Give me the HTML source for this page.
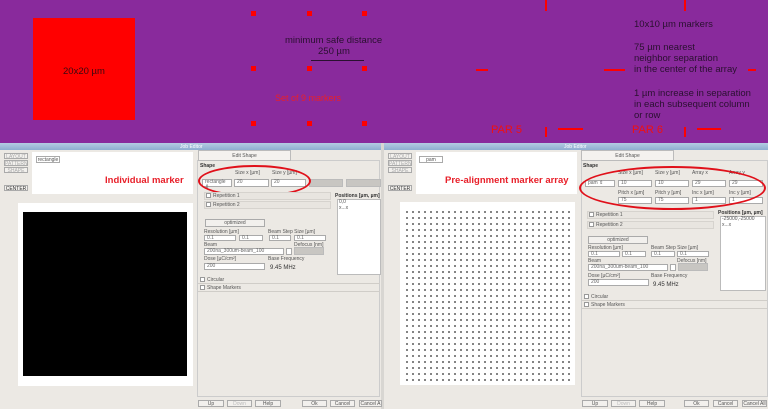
<!DOCTYPE html><html><head><meta charset="utf-8"><style>
*{margin:0;padding:0;box-sizing:border-box}
body{width:768px;height:409px;overflow:hidden;background:#ece9e4;font-family:"Liberation Sans",sans-serif;position:relative}
.a{position:absolute}
.t{position:absolute;font-size:5px;color:#555;white-space:nowrap;line-height:6px}
.in{position:absolute;background:#fff;border:1px solid #aaa;font-size:5px;color:#666;line-height:5px;padding-left:2px}
.gr{position:absolute;background:#c8c6c2;border:1px solid #bbb}
.btn{position:absolute;background:#f2f0ed;border:1px solid #aaa;font-size:5px;color:#555;text-align:center;line-height:6px}
.cb{position:absolute;width:5px;height:5px;border:1px solid #999;background:#fff}
.row{position:absolute;border:1px solid #d6d3ce;background:#e8e5e0}
.rd{position:absolute;background:#f00;width:5px;height:5px}
.pt{position:absolute;font-size:9.5px;color:#2a1030;white-space:nowrap;line-height:11px}
.ell{position:absolute;border:2px solid #e0101a;border-radius:50%}
</style></head><body>
<div class="a" style="left:0;top:0;width:768px;height:143px;background:#892a9c"></div>
<div class="a" style="left:33px;top:18px;width:102px;height:102px;background:#ff0000"></div>
<div class="pt" style="left:63px;top:66px;color:#3a0a10">20x20 µm</div>
<div class="rd" style="left:251px;top:11px"></div><div class="rd" style="left:307px;top:11px"></div><div class="rd" style="left:362px;top:11px"></div>
<div class="rd" style="left:251px;top:66px"></div><div class="rd" style="left:307px;top:66px"></div><div class="rd" style="left:362px;top:66px"></div>
<div class="rd" style="left:251px;top:121px"></div><div class="rd" style="left:307px;top:121px"></div><div class="rd" style="left:362px;top:121px"></div>
<div class="pt" style="left:285px;top:35px">minimum safe distance</div>
<div class="pt" style="left:318px;top:46px">250 µm</div>
<div class="a" style="left:311px;top:60px;width:53px;height:1px;background:#2a1030"></div>
<div class="pt" style="left:275px;top:93px;color:#e8202a;font-size:9px">Set of 9 markers</div>
<div class="a" style="left:545px;top:0;width:2px;height:11px;background:#f00"></div>
<div class="a" style="left:684px;top:0;width:2px;height:11px;background:#f00"></div>
<div class="a" style="left:476px;top:69px;width:12px;height:2px;background:#f00"></div>
<div class="a" style="left:604px;top:69px;width:21px;height:2px;background:#f00"></div>
<div class="a" style="left:748px;top:69px;width:8px;height:2px;background:#f00"></div>
<div class="pt" style="left:634px;top:19px">10x10 µm markers</div>
<div class="pt" style="left:634px;top:42px">75 µm nearest<br>neighbor separation<br>in the center of the array</div>
<div class="pt" style="left:634px;top:88px">1 µm increase in separation<br>in each subsequent column<br>or row</div>
<div class="pt" style="left:491px;top:125px;color:#f01010;font-size:11px">PAR 5</div>
<div class="pt" style="left:632px;top:125px;color:#f01010;font-size:11px">PAR 6</div>
<div class="a" style="left:545px;top:127px;width:2px;height:10px;background:#f00"></div>
<div class="a" style="left:684px;top:127px;width:2px;height:10px;background:#f00"></div>
<div class="a" style="left:558px;top:128px;width:25px;height:2px;background:#f00"></div>
<div class="a" style="left:697px;top:128px;width:24px;height:2px;background:#f00"></div>

<div class="a" style="left:0;top:143px;width:381px;height:7px;background:linear-gradient(#b4cce2,#8eaed0)"></div>
<div class="a" style="left:384px;top:143px;width:384px;height:7px;background:linear-gradient(#b4cce2,#8eaed0)"></div>
<div class="a" style="left:381px;top:143px;width:3px;height:266px;background:#d8d6d2"></div>
<div class="t" style="left:180px;top:144px;color:#fff">Job Editor</div>
<div class="t" style="left:564px;top:144px;color:#fff">Job Editor</div>

<div class="btn" style="left:4px;top:153px;width:24px;height:6px;color:#aaa">LAYOUT</div>
<div class="btn" style="left:4px;top:160px;width:24px;height:6px;color:#aaa">PATTERN</div>
<div class="btn" style="left:4px;top:167px;width:24px;height:6px;color:#aaa">SHAPE</div>
<div class="btn" style="left:4px;top:185px;width:24px;height:6px;color:#333">CENTER</div>
<div class="a" style="left:32px;top:152px;width:161px;height:42px;background:#fff"></div>
<div class="btn" style="left:36px;top:156px;width:24px;height:7px;background:#fff">rectangle</div>
<div class="a" style="left:105px;top:175px;font-size:9.5px;font-weight:bold;color:#e8202a;white-space:nowrap">Individual marker</div>
<div class="a" style="left:18px;top:203px;width:175px;height:183px;background:#fff"></div>
<div class="a" style="left:23px;top:212px;width:164px;height:164px;background:#000"></div>

<div class="a" style="left:197px;top:160px;width:183px;height:237px;border:1px solid #ccc"></div>
<div class="a" style="left:198px;top:150px;width:93px;height:11px;background:#f4f2ef;border:1px solid #bbb;font-size:5px;text-align:center;line-height:10px;color:#555">Edit Shape</div>
<div class="t" style="left:200px;top:163px;font-weight:bold;color:#333">Shape</div>
<div class="t" style="left:235px;top:170px">Size x [µm]</div>
<div class="t" style="left:272px;top:170px">Size y [µm]</div>
<div class="in" style="left:202px;top:179px;width:30px;height:8px">rectangle ⇕</div>
<div class="in" style="left:234px;top:179px;width:35px;height:8px">20</div>
<div class="in" style="left:271px;top:179px;width:35px;height:8px">20</div>
<div class="gr" style="left:309px;top:179px;width:34px;height:8px"></div>
<div class="gr" style="left:346px;top:179px;width:35px;height:8px"></div>
<div class="ell" style="left:198px;top:165px;width:113px;height:32px"></div>
<div class="row" style="left:204px;top:192px;width:127px;height:8px"></div><div class="cb" style="left:206px;top:193px"></div><div class="t" style="left:213px;top:193px">Repetition 1</div>
<div class="row" style="left:204px;top:201px;width:127px;height:8px"></div><div class="cb" style="left:206px;top:202px"></div><div class="t" style="left:213px;top:202px">Repetition 2</div>
<div class="t" style="left:335px;top:193px;font-weight:bold;color:#333">Positions [µm, µm]</div>
<div class="a" style="left:337px;top:199px;width:44px;height:76px;background:#fff;border:1px solid #bbb"></div>
<div class="t" style="left:339px;top:199px">0,0<br>x...x</div>
<div class="btn" style="left:205px;top:219px;width:60px;height:8px">optimized</div>
<div class="t" style="left:204px;top:229px">Resolution [µm]</div><div class="t" style="left:268px;top:229px">Beam Step Size [µm]</div>
<div class="in" style="left:204px;top:235px;width:32px;height:6px">0.1</div>
<div class="in" style="left:239px;top:235px;width:24px;height:6px">0.1</div>
<div class="in" style="left:269px;top:235px;width:22px;height:6px">0.1</div>
<div class="in" style="left:294px;top:235px;width:32px;height:6px">0.1</div>
<div class="t" style="left:204px;top:242px">Beam</div><div class="t" style="left:294px;top:242px">Defocus [nm]</div>
<div class="in" style="left:204px;top:248px;width:80px;height:7px">200na_300um-beam_100</div>
<div class="in" style="left:286px;top:248px;width:6px;height:7px"></div>
<div class="gr" style="left:294px;top:247px;width:30px;height:8px"></div>
<div class="t" style="left:204px;top:256px">Dose [µC/cm²]</div><div class="t" style="left:268px;top:256px">Base Frequency</div>
<div class="in" style="left:204px;top:263px;width:61px;height:7px">200</div>
<div class="t" style="left:270px;top:265px;font-size:6px;color:#333">9.45 MHz</div>
<div class="cb" style="left:200px;top:277px"></div><div class="t" style="left:207px;top:277px">Circular</div>
<div class="a" style="left:198px;top:283px;width:182px;height:1px;background:#d0cdc8"></div>
<div class="cb" style="left:200px;top:285px"></div><div class="t" style="left:207px;top:285px">Shape Markers</div>
<div class="a" style="left:198px;top:291px;width:182px;height:1px;background:#d0cdc8"></div>
<div class="btn" style="left:198px;top:400px;width:26px;height:7px">Up</div>
<div class="btn" style="left:227px;top:400px;width:25px;height:7px;color:#bbb">Down</div>
<div class="btn" style="left:255px;top:400px;width:26px;height:7px">Help</div>
<div class="btn" style="left:302px;top:400px;width:25px;height:7px">Ok</div>
<div class="btn" style="left:330px;top:400px;width:25px;height:7px">Cancel</div>
<div class="btn" style="left:359px;top:400px;width:23px;height:7px">Cancel A</div>

<div class="btn" style="left:388px;top:153px;width:24px;height:6px;color:#aaa">LAYOUT</div>
<div class="btn" style="left:388px;top:160px;width:24px;height:6px;color:#aaa">PATTERN</div>
<div class="btn" style="left:388px;top:167px;width:24px;height:6px;color:#aaa">SHAPE</div>
<div class="btn" style="left:388px;top:185px;width:24px;height:6px;color:#333">CENTER</div>
<div class="a" style="left:416px;top:152px;width:161px;height:42px;background:#fff"></div>
<div class="btn" style="left:419px;top:156px;width:24px;height:7px;background:#fff">pam</div>
<div class="a" style="left:445px;top:175px;font-size:9.5px;font-weight:bold;color:#e8202a;white-space:nowrap">Pre-alignment marker array</div>
<div class="a" style="left:400px;top:202px;width:175px;height:183px;background:#fff"></div>
<div class="a" style="left:404px;top:209px;width:168px;height:174px;background-image:radial-gradient(circle,#444 0.7px,transparent 1.1px);background-size:6px 6px"></div>

<div class="a" style="left:581px;top:160px;width:187px;height:237px;border:1px solid #ccc"></div>
<div class="a" style="left:581px;top:150px;width:93px;height:11px;background:#f4f2ef;border:1px solid #bbb;font-size:5px;text-align:center;line-height:10px;color:#555">Edit Shape</div>
<div class="t" style="left:583px;top:163px;font-weight:bold;color:#333">Shape</div>
<div class="t" style="left:618px;top:170px">Size x [µm]</div><div class="t" style="left:655px;top:170px">Size y [µm]</div><div class="t" style="left:692px;top:170px">Array x</div><div class="t" style="left:729px;top:170px">Array y</div>
<div class="in" style="left:585px;top:180px;width:30px;height:7px">pam ⇕</div>
<div class="in" style="left:618px;top:180px;width:34px;height:7px">10</div>
<div class="in" style="left:655px;top:180px;width:34px;height:7px">10</div>
<div class="in" style="left:692px;top:180px;width:34px;height:7px">29</div>
<div class="in" style="left:729px;top:180px;width:34px;height:7px">29</div>
<div class="t" style="left:618px;top:190px">Pitch x [µm]</div><div class="t" style="left:655px;top:190px">Pitch y [µm]</div><div class="t" style="left:692px;top:190px">Inc x [µm]</div><div class="t" style="left:729px;top:190px">Inc y [µm]</div>
<div class="in" style="left:618px;top:197px;width:34px;height:7px">75</div>
<div class="in" style="left:655px;top:197px;width:34px;height:7px">75</div>
<div class="in" style="left:692px;top:197px;width:34px;height:7px">1</div>
<div class="in" style="left:729px;top:197px;width:34px;height:7px">1</div>
<div class="ell" style="left:579px;top:166px;width:187px;height:44px"></div>
<div class="row" style="left:587px;top:211px;width:127px;height:8px"></div><div class="cb" style="left:589px;top:212px"></div><div class="t" style="left:596px;top:212px">Repetition 1</div>
<div class="row" style="left:587px;top:221px;width:127px;height:8px"></div><div class="cb" style="left:589px;top:222px"></div><div class="t" style="left:596px;top:222px">Repetition 2</div>
<div class="t" style="left:718px;top:210px;font-weight:bold;color:#333">Positions [µm, µm]</div>
<div class="a" style="left:720px;top:216px;width:46px;height:75px;background:#fff;border:1px solid #bbb"></div>
<div class="t" style="left:722px;top:216px">-25000,-25000<br>x...x</div>
<div class="btn" style="left:588px;top:236px;width:60px;height:8px">optimized</div>
<div class="t" style="left:588px;top:245px">Resolution [µm]</div><div class="t" style="left:651px;top:245px">Beam Step Size [µm]</div>
<div class="in" style="left:588px;top:251px;width:32px;height:6px">0.1</div>
<div class="in" style="left:622px;top:251px;width:24px;height:6px">0.1</div>
<div class="in" style="left:651px;top:251px;width:24px;height:6px">0.1</div>
<div class="in" style="left:677px;top:251px;width:32px;height:6px">0.1</div>
<div class="t" style="left:588px;top:258px">Beam</div><div class="t" style="left:677px;top:258px">Defocus [nm]</div>
<div class="in" style="left:588px;top:264px;width:80px;height:7px">200na_300um-beam_100</div>
<div class="in" style="left:670px;top:264px;width:6px;height:7px"></div>
<div class="gr" style="left:678px;top:263px;width:30px;height:8px"></div>
<div class="t" style="left:588px;top:273px">Dose [µC/cm²]</div><div class="t" style="left:651px;top:273px">Base Frequency</div>
<div class="in" style="left:588px;top:279px;width:61px;height:7px">200</div>
<div class="t" style="left:653px;top:282px;font-size:6px;color:#333">9.45 MHz</div>
<div class="cb" style="left:584px;top:294px"></div><div class="t" style="left:591px;top:294px">Circular</div>
<div class="a" style="left:582px;top:300px;width:185px;height:1px;background:#d0cdc8"></div>
<div class="cb" style="left:584px;top:302px"></div><div class="t" style="left:591px;top:302px">Shape Markers</div>
<div class="a" style="left:582px;top:308px;width:185px;height:1px;background:#d0cdc8"></div>
<div class="btn" style="left:582px;top:400px;width:26px;height:7px">Up</div>
<div class="btn" style="left:611px;top:400px;width:25px;height:7px;color:#bbb">Down</div>
<div class="btn" style="left:639px;top:400px;width:26px;height:7px">Help</div>
<div class="btn" style="left:684px;top:400px;width:25px;height:7px">Ok</div>
<div class="btn" style="left:713px;top:400px;width:25px;height:7px">Cancel</div>
<div class="btn" style="left:742px;top:400px;width:25px;height:7px">Cancel All</div>
</body></html>
